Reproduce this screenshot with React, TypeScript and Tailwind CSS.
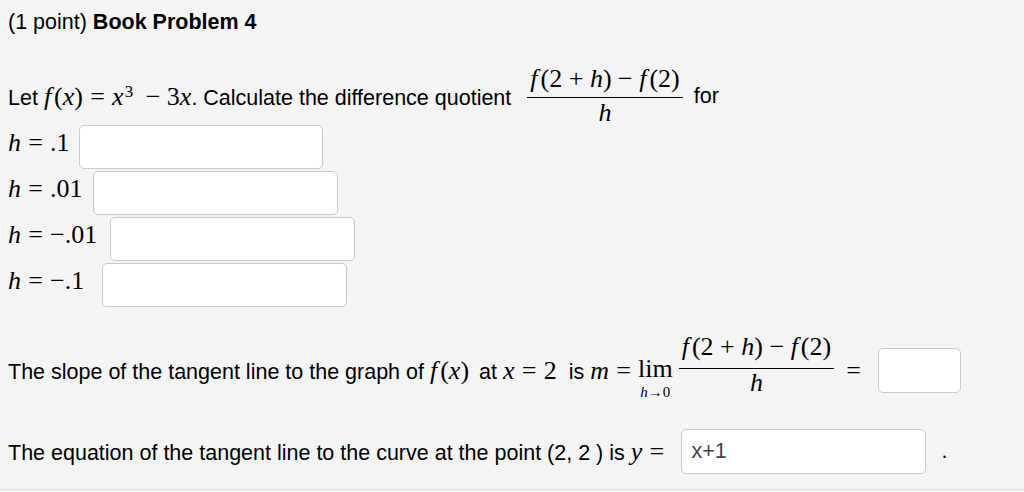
import type { ReactNode } from 'react'

const serif = "font-['Liberation_Serif',serif]"

function M({ children, className = '' }: { children: ReactNode; className?: string }) {
  return <span className={`${serif} text-[26px] ${className}`}>{children}</span>
}

function V({ children }: { children: ReactNode }) {
  return <i className={`${serif} italic`}>{children}</i>
}

// italic f gets a little room before its parenthesis, as MathJax does
function F() {
  return <i className={`${serif} italic pr-[3px]`}>f</i>
}

function Rel({ children }: { children: ReactNode }) {
  return <span className="mx-[0.278em]">{children}</span>
}

function Bin({ children }: { children: ReactNode }) {
  return <span className="mx-[0.25em]">{children}</span>
}

// f(2 + h) − f(2) over h
function Quotient({ top, bar, className }: { top: string; bar: string; className: string }) {
  return (
    <div className={`flex flex-col items-stretch ${serif} text-[26px] ${className}`}>
      <div className={`px-[3px] text-center leading-[26px] whitespace-nowrap ${top}`}>
        <F />(2<Bin>+</Bin>
        <V>h</V>)<Bin>−</Bin>
        <F />(2)
      </div>
      <div className="h-px bg-black" />
      <div className={`text-center leading-[24px] ${bar}`}>
        <V>h</V>
      </div>
    </div>
  )
}

function Box({ className = '', value }: { className?: string; value?: string }) {
  return (
    <input
      readOnly
      defaultValue={value}
      className={`h-[44px] shrink-0 rounded-[5px] border border-[#c9c9c9] bg-white px-[9px] text-[21.5px] text-[#444] outline-none ${className}`}
    />
  )
}

const rows = [
  { n: '.1', w: 'w-[71px]', box: 'w-[244px]' },
  { n: '.01', w: 'w-[85px]', box: 'w-[245px]' },
  { n: '−.01', w: 'w-[102px]', box: 'w-[245px]' },
  { n: '−.1', w: 'w-[94px]', box: 'w-[245px]' },
]

export default function App() {
  return (
    <div className="min-h-screen bg-[#f4f4f4] font-['Liberation_Sans',Arial,sans-serif] text-[21.5px] text-black">
      <div className="h-[490px] border-b border-[#e0e0e0] px-[8px]">
        {/* Header */}
        <div className="pt-[9px] leading-[26px]">
          (1 point) <b>Book Problem 4</b>
        </div>

        {/* Difference quotient */}
        <div className="mt-[31px] flex items-center">
          <span className="whitespace-pre">
            Let{' '}
            <M>
              <F />(<V>x</V>)<Rel>=</Rel>
              <V>x</V>
              <sup className="text-[17px] ml-[1px] mr-[6px]">3</sup>
              <Bin>−</Bin>3<V>x</V>
            </M>
            . Calculate the difference quotient{' '}
          </span>
          <Quotient top="mb-[5px]" bar="mt-[3px]" className="ml-[10px] mr-[11px] mb-[2px]" />
          <span>for</span>
        </div>

        {/* h rows */}
        <div className="-mt-[2px] flex flex-col gap-[2px]">
          {rows.map(r => (
            <div key={r.n} className="flex items-center">
              <div className={`${r.w} shrink-0 mb-[7px] leading-[26px]`}>
                <M>
                  <V>h</V>
                  <Rel>=</Rel>
                  {r.n}
                </M>
              </div>
              <Box className={r.box} />
            </div>
          ))}
        </div>

        {/* Slope */}
        <div className="mt-[27px] flex items-center">
          <span className="whitespace-pre">
            The slope of the tangent line to the graph of{' '}
            <M className="mr-[4px]">
              <F />(<V>x</V>)
            </M>{' '}
            at{' '}
            <M className="mr-[6px]">
              <V>x</V>
              <Rel>=</Rel>2
            </M>{' '}
            is{' '}
            <M>
              <V>m</V>
              <Rel>=</Rel>
            </M>
          </span>
          <div className={`mt-[14px] flex flex-col items-center ${serif}`}>
            <span className="text-[26px] leading-[28px]">lim</span>
            <span className="mt-[1px] text-[15px] leading-[16px] whitespace-nowrap">
              <i>h</i>→0
            </span>
          </div>
          <Quotient top="mb-[8px]" bar="mt-[2px]" className="ml-[6px] mb-[12px]" />
          <span className={`${serif} text-[26px] ml-[12px] mr-[17px]`}>=</span>
          <Box className="w-[83px] h-[45px]" />
        </div>

        {/* Tangent line */}
        <div className="mt-[22px] flex items-center">
          <span className="whitespace-pre">
            The equation of the tangent line to the curve at the point (2, 2 ) is{' '}
            <M>
              <V>y</V>
              <Rel>=</Rel>
            </M>
          </span>
          <Box className="ml-[10px] w-[245px] h-[45px]" value="x+1" />
          <span className="ml-[15px]">.</span>
        </div>
      </div>
    </div>
  )
}
